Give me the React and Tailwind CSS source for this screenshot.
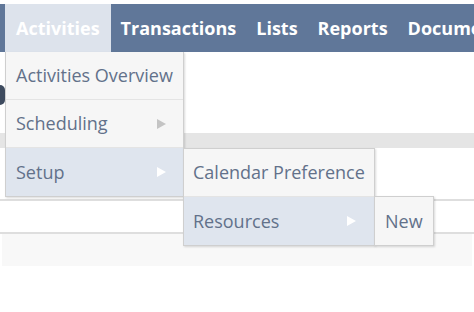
import React from "react";

const navItems = ["Activities", "Transactions", "Lists", "Reports", "Documents"];

function Arrow({ light }) {
  return (
    <svg width="9" height="10" viewBox="0 0 9 10" className="shrink-0">
      <path d="M0 0 L9 5 L0 10 Z" fill={light ? "#ffffff" : "#c4c4c4"} />
    </svg>
  );
}

function MenuItem({ label, arrow, active, last, pad = "pl-[10px] pr-[17px]" }) {
  return (
    <div
      className={`flex items-center justify-between h-[48px] ${pad} ${
        active ? "bg-[#dfe5ee]" : "bg-[#f6f6f6]"
      } ${last ? "" : "border-b border-[#e4e4e4]"}`}
    >
      <span className="text-[18px] text-[#62718a] whitespace-nowrap">{label}</span>
      {arrow && <Arrow light={active} />}
    </div>
  );
}

export default function App() {
  return (
    <div
      className="relative w-[474px] h-[312px] overflow-hidden bg-white"
      style={{ fontFamily: "'Open Sans', sans-serif" }}
    >
      {/* Top bar */}
      <div className="h-[4px] bg-white" />
      <nav className="flex h-[48px] bg-[#607799] pl-[5px] whitespace-nowrap overflow-hidden">
        {navItems.map((item, i) => (
          <div
            key={item}
            className={`flex items-center text-[18px] font-bold text-white ${
              i === 0 ? "px-[11px] bg-[#dde3ec]" : "px-[10px]"
            }`}
          >
            {item}
          </div>
        ))}
      </nav>

      {/* Page content behind menus */}
      <div className="h-[81px] pt-[33px]">
        <div className="w-[5px] h-[20px] bg-[#3e4b5f] rounded-r-full" />
      </div>
      <div className="h-[15px] bg-[#e5e5e5]" />
      <div className="h-[53px] bg-white border-b-2 border-[#dedede]" />
      <div className="h-[33px] bg-white border-b-2 border-[#dedede]" />
      <div className="h-[32px] mx-[2px] bg-[#f8f8f8]" />

      {/* Activities dropdown */}
      <div className="absolute left-[5px] top-[52px] w-[179px] border border-[#cfcfcf] border-t-0 shadow-[1px_1px_2px_rgba(0,0,0,0.15)]">
        <MenuItem label="Activities Overview" />
        <MenuItem label="Scheduling" arrow />
        <MenuItem label="Setup" arrow active last />
      </div>

      {/* Setup submenu */}
      <div className="absolute left-[183px] top-[148px] w-[192px] border border-[#cfcfcf] shadow-[1px_1px_2px_rgba(0,0,0,0.15)]">
        <MenuItem label="Calendar Preference" pad="pl-[9px] pr-[18px]" />
        <MenuItem label="Resources" arrow active last pad="pl-[9px] pr-[18px]" />
      </div>

      {/* Resources submenu */}
      <div className="absolute left-[374px] top-[196px] w-[60px] border border-[#cfcfcf] shadow-[1px_1px_2px_rgba(0,0,0,0.15)]">
        <MenuItem label="New" last pad="pl-[10px] pr-[10px]" />
      </div>
    </div>
  );
}
